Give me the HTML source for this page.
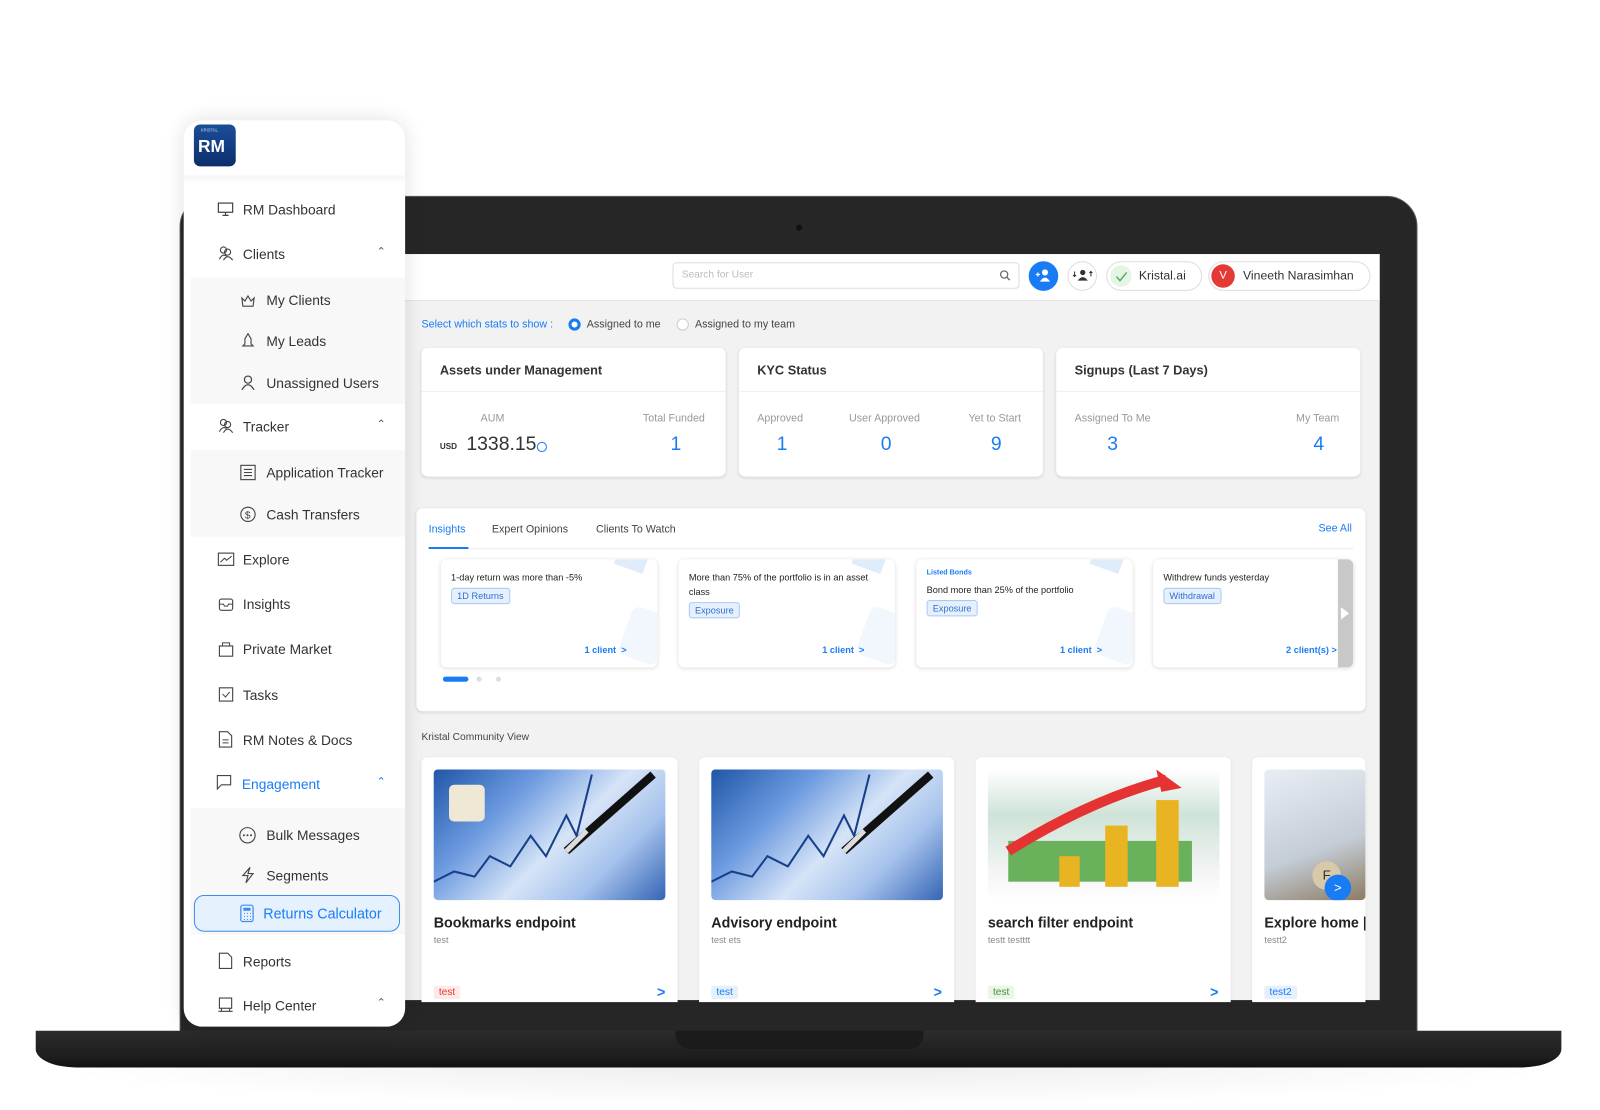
<!DOCTYPE html>
<html><head><meta charset="utf-8">
<style>
*{box-sizing:border-box;margin:0;padding:0}
html,body{width:1600px;height:1110px;overflow:hidden;background:#fff;font-family:"Liberation Sans",sans-serif}
#w{position:absolute;left:0;top:0;width:1560px;height:1082px;transform:scale(1.0205);transform-origin:0 0}
.a{position:absolute}
.t{position:absolute;white-space:nowrap}
.card{position:absolute;background:#fff;border-radius:6px;box-shadow:0 1px 3px rgba(0,0,0,.12)}
.lbl{position:absolute;font-size:10.5px;color:#999}
.num{position:absolute;font-size:19px;color:#1a7cf5}
.ins{position:absolute;top:548px;height:106px;background:#fff;border-radius:6px;box-shadow:0 1px 4px rgba(0,0,0,.14);overflow:hidden}
.ins .tx{position:absolute;left:10px;top:11px;font-size:9px;color:#222;line-height:14px;width:180px}
.tag{position:absolute;font-size:9px;color:#2f6fd1;background:#e6f0fd;border:1px solid #a9c9f3;border-radius:3px;padding:2px 5px}
.cl{position:absolute;right:30px;top:84px;font-size:9px;font-weight:bold;color:#1a7cf5}
.cc{position:absolute;top:742px;height:240px;background:#fff;border-radius:6px 6px 0 0;overflow:hidden;box-shadow:0 1px 3px rgba(0,0,0,.08)}
.cc .img{position:absolute;left:12px;top:12px;height:128px;border-radius:4px;overflow:hidden}
.cc h3{position:absolute;left:12px;top:154px;font-size:14px;font-weight:bold;color:#222;white-space:nowrap}
.cc .s{position:absolute;left:12px;top:174px;font-size:9px;color:#888}
.cc .tg{position:absolute;left:12px;top:224px;font-size:10px;padding:1px 5px;border-radius:2px}
.cc .ar{position:absolute;right:12px;top:222px;color:#1a7cf5;font-size:14px;font-weight:bold}
</style></head><body><div id="w">
<div class="a" style="left:20px;top:1040px;width:1530px;height:45px;background:radial-gradient(ellipse at 50% 0%,rgba(0,0,0,.08),rgba(0,0,0,0) 70%)"></div>
<div class="a" style="left:176px;top:192px;width:1213px;height:830px;background:#262626;border-radius:30px 30px 0 0;border:1px solid #555"></div>
<div class="a" style="left:780px;top:220px;width:6px;height:6px;border-radius:3px;background:#111"></div>
<div class="a" style="left:215px;top:249px;width:1137px;height:731px;background:#f2f2f2;overflow:hidden">
  <div class="a" style="left:0;top:0;width:1137px;height:46px;background:#fff;border-bottom:1px solid #e5e5e5"></div>
</div>
<div class="a" style="left:659px;top:257px;width:340px;height:26px;border:1px solid #ddd;border-radius:4px;background:#fff"></div>
<div class="t" style="left:668px;top:264px;font-size:10px;color:#bbb">Search for User</div>
<svg class="a" style="left:979px;top:264px" width="12" height="12"><circle cx="5" cy="5" r="3.5" fill="none" stroke="#666" stroke-width="1.2"/><path d="M7.5 7.5 L10.5 10.5" stroke="#666" stroke-width="1.3"/></svg>
<div class="a" style="left:1008px;top:256px;width:29px;height:29px;border-radius:50%;background:#1a7cf5"></div>
<svg class="a" style="left:1013px;top:262px" width="20" height="16"><circle cx="11" cy="5" r="3" fill="#fff"/><path d="M6 14 q5-8 10 0z" fill="#fff"/><path d="M2 7h4M4 5v4" stroke="#fff" stroke-width="1.3"/></svg>
<div class="a" style="left:1046px;top:256px;width:29px;height:29px;border-radius:50%;background:#fff;border:1px solid #ddd"></div>
<svg class="a" style="left:1050px;top:262px" width="22" height="16"><circle cx="11" cy="5" r="2.6" fill="#333"/><path d="M6 13 q5-7 10 0z" fill="#333"/><path d="M3 4v5M1.5 7.5 3 9 4.5 7.5M19 4v5M17.5 5.5 19 4 20.5 5.5" stroke="#333" stroke-width="1" fill="none"/></svg>
<div class="a" style="left:1084px;top:256px;width:94px;height:29px;border-radius:15px;background:#fff;border:1px solid #ddd"></div>
<div class="a" style="left:1088px;top:260px;width:21px;height:21px;border-radius:50%;background:#e4f5e6"></div>
<svg class="a" style="left:1092px;top:264px" width="14" height="14"><path d="M2 7 L5.5 11 L12 3" stroke="#4caf50" stroke-width="1.4" fill="none"/></svg>
<div class="t" style="left:1116px;top:263px;font-size:12px;color:#333">Kristal.ai</div>
<div class="a" style="left:1184px;top:256px;width:159px;height:29px;border-radius:15px;background:#fff;border:1px solid #ddd"></div>
<div class="a" style="left:1187px;top:259px;width:23px;height:23px;border-radius:50%;background:#e53935;color:#fff;font-size:11px;text-align:center;line-height:23px">V</div>
<div class="t" style="left:1218px;top:263px;font-size:12px;color:#333">Vineeth Narasimhan</div>
<div class="t" style="left:413px;top:312px;font-size:10.5px;color:#1a7cf5">Select which stats to show :</div>
<div class="a" style="left:557px;top:312px;width:12px;height:12px;border-radius:50%;border:3px solid #1a7cf5;background:#fff"></div>
<div class="t" style="left:575px;top:312px;font-size:10.5px;color:#444">Assigned to me</div>
<div class="a" style="left:663px;top:312px;width:12px;height:12px;border-radius:50%;border:1px solid #ccc;background:#fff"></div>
<div class="t" style="left:681px;top:312px;font-size:10.5px;color:#444">Assigned to my team</div>
<div class="card" style="left:413px;top:341px;width:298px;height:126px">
 <div class="t" style="left:18px;top:15px;font-size:12.5px;font-weight:bold;color:#333">Assets under Management</div>
 <div class="a" style="left:0;top:42px;width:298px;height:1px;background:#eee"></div>
 <div class="lbl" style="left:58px;top:63px">AUM</div><div class="lbl" style="left:217px;top:63px">Total Funded</div>
 <div class="t" style="left:18px;top:92px;font-size:8px;font-weight:bold;color:#333">USD</div>
 <div class="t" style="left:44px;top:84px;font-size:19px;color:#333">1338.15</div>
 <div class="a" style="left:113px;top:92px;width:10px;height:10px;border-radius:50%;border:1px solid #1a7cf5"></div>
 <div class="num" style="left:244px;top:84px">1</div>
</div>
<div class="card" style="left:724px;top:341px;width:298px;height:126px">
 <div class="t" style="left:18px;top:15px;font-size:12.5px;font-weight:bold;color:#333">KYC Status</div>
 <div class="a" style="left:0;top:42px;width:298px;height:1px;background:#eee"></div>
 <div class="lbl" style="left:18px;top:63px">Approved</div><div class="lbl" style="left:108px;top:63px">User Approved</div><div class="lbl" style="left:225px;top:63px">Yet to Start</div>
 <div class="num" style="left:37px;top:84px">1</div><div class="num" style="left:139px;top:84px">0</div><div class="num" style="left:247px;top:84px">9</div>
</div>
<div class="card" style="left:1035px;top:341px;width:298px;height:126px">
 <div class="t" style="left:18px;top:15px;font-size:12.5px;font-weight:bold;color:#333">Signups (Last 7 Days)</div>
 <div class="a" style="left:0;top:42px;width:298px;height:1px;background:#eee"></div>
 <div class="lbl" style="left:18px;top:63px">Assigned To Me</div><div class="lbl" style="left:235px;top:63px">My Team</div>
 <div class="num" style="left:50px;top:84px">3</div><div class="num" style="left:252px;top:84px">4</div>
</div>
<div class="card" style="left:408px;top:498px;width:930px;height:199px"></div>
<div class="t" style="left:420px;top:513px;font-size:10.5px;color:#1a7cf5">Insights</div>
<div class="t" style="left:482px;top:513px;font-size:10.5px;color:#444">Expert Opinions</div>
<div class="t" style="left:584px;top:513px;font-size:10.5px;color:#444">Clients To Watch</div>
<div class="t" style="left:1292px;top:512px;font-size:10.5px;color:#1a7cf5">See All</div>
<div class="a" style="left:420px;top:537px;width:906px;height:1px;background:#eee"></div>
<div class="a" style="left:420px;top:536px;width:39px;height:2px;background:#1a7cf5"></div>
<div class="ins" style="left:432px;width:212px"><div class="a" style="left:172px;top:-10px;width:30px;height:20px;background:#e1ecfb;transform:rotate(20deg)"></div><div class="a" style="left:180px;top:50px;width:40px;height:50px;background:#f2f6fd;border-radius:8px;transform:rotate(20deg)"></div><div class="tx">1-day return was more than -5%</div><div class="tag" style="left:10px;top:28px">1D Returns</div><div class="cl">1 client &nbsp;&gt;</div></div>
<div class="ins" style="left:665px;width:212px"><div class="a" style="left:172px;top:-10px;width:30px;height:20px;background:#e1ecfb;transform:rotate(20deg)"></div><div class="a" style="left:180px;top:50px;width:40px;height:50px;background:#f2f6fd;border-radius:8px;transform:rotate(20deg)"></div><div class="tx">More than 75% of the portfolio is in an asset class</div><div class="tag" style="left:10px;top:42px">Exposure</div><div class="cl">1 client &nbsp;&gt;</div></div>
<div class="ins" style="left:898px;width:212px"><div class="a" style="left:172px;top:-10px;width:30px;height:20px;background:#e1ecfb;transform:rotate(20deg)"></div><div class="a" style="left:180px;top:50px;width:40px;height:50px;background:#f2f6fd;border-radius:8px;transform:rotate(20deg)"></div><div class="t" style="left:10px;top:10px;font-size:7px;font-weight:bold;color:#1a7cf5">Listed Bonds</div><div class="tx" style="top:23px">Bond more than 25% of the portfolio</div><div class="tag" style="left:10px;top:40px">Exposure</div><div class="cl">1 client &nbsp;&gt;</div></div>
<div class="ins" style="left:1130px;width:196px"><div class="tx">Withdrew funds yesterday</div><div class="tag" style="left:10px;top:28px">Withdrawal</div><div class="cl" style="right:16px">2 client(s) &gt;</div><div class="a" style="left:181px;top:0;width:15px;height:106px;background:#c8c8c8"></div><div class="a" style="left:184px;top:47px;border-left:8px solid #fff;border-top:6px solid transparent;border-bottom:6px solid transparent"></div></div>
<div class="a" style="left:434px;top:663px;width:25px;height:5px;border-radius:3px;background:#1a7cf5"></div>
<div class="a" style="left:467px;top:663px;width:5px;height:5px;border-radius:3px;background:#ddd"></div>
<div class="a" style="left:486px;top:663px;width:5px;height:5px;border-radius:3px;background:#ddd"></div>
<div class="t" style="left:413px;top:717px;font-size:10px;color:#444">Kristal Community View</div>
<div class="cc" style="left:413px;width:251px"><div class="img" style="width:227px;background:linear-gradient(135deg,#1f56a8 0%,#6d9be0 30%,#d6e4f7 55%,#a5c2ec 75%,#3465b5 100%)"><svg width="227" height="128"><path d="M0 110 l20-10 20 5 15-20 20 10 20-30 15 20 20-40 10 20 15-60" stroke="#173f8a" stroke-width="2" fill="none"/><path d="M130 80 L215 5" stroke="#111" stroke-width="8"/><path d="M130 80 L150 60" stroke="#ddd" stroke-width="5"/><rect x="15" y="15" width="35" height="36" rx="5" fill="#efe8d4"/></svg></div><h3>Bookmarks endpoint</h3><div class="s">test</div><div class="tg" style="background:#fdeaea;color:#e53935">test</div><div class="ar">&gt;</div></div>
<div class="cc" style="left:685px;width:250px"><div class="img" style="width:227px;background:linear-gradient(135deg,#1f56a8 0%,#6d9be0 30%,#d6e4f7 55%,#a5c2ec 75%,#3465b5 100%)"><svg width="227" height="128"><path d="M0 110 l20-10 20 5 15-20 20 10 20-30 15 20 20-40 10 20 15-60" stroke="#173f8a" stroke-width="2" fill="none"/><path d="M130 80 L215 5" stroke="#111" stroke-width="8"/><path d="M130 80 L150 60" stroke="#ddd" stroke-width="5"/></svg></div><h3>Advisory endpoint</h3><div class="s">test ets</div><div class="tg" style="background:#e6f0fd;color:#1a7cf5">test</div><div class="ar">&gt;</div></div>
<div class="cc" style="left:956px;width:250px"><div class="img" style="width:227px;background:linear-gradient(180deg,#fff 0%,#cfe3d8 35%,#f5f5f5 80%,#fff 100%)"><svg width="227" height="128"><rect x="20" y="70" width="180" height="40" fill="#69b15a"/><rect x="70" y="85" width="20" height="30" fill="#e9b422"/><rect x="115" y="55" width="22" height="60" fill="#e9b422"/><rect x="165" y="30" width="22" height="85" fill="#e9b422"/><path d="M20 80 Q100 30 175 10" stroke="#e53232" stroke-width="10" fill="none"/><path d="M165 0 L190 18 L170 22z" fill="#e53232"/></svg></div><h3>search filter endpoint</h3><div class="s">testt testttt</div><div class="tg" style="background:#eaf6e6;color:#4a8f3a">test</div><div class="ar">&gt;</div></div>
<div class="cc" style="left:1227px;width:111px"><div class="img" style="width:99px;background:linear-gradient(160deg,#e9eef5,#c4ccd6 60%,#8c7c62)"><div class="a" style="left:47px;top:90px;width:28px;height:28px;border-radius:50%;background:#d8c9a8;font-size:13px;text-align:center;line-height:28px;color:#333">F</div><div class="a" style="left:59px;top:103px;width:26px;height:26px;border-radius:50%;background:#1a7cf5;color:#fff;text-align:center;line-height:26px;font-size:13px">&gt;</div></div><h3>Explore home |</h3><div class="s">testt2</div><div class="tg" style="background:#e6f0fd;color:#1a7cf5">test2</div></div>
<div class="a" style="left:35px;top:1010px;width:1495px;height:36px;background:linear-gradient(#2c2c2c,#1e1e1e 70%,#111);border-radius:0 0 40px 40px / 0 0 18px 18px"></div>
<div class="a" style="left:662px;top:1010px;width:243px;height:18px;background:#1b1b1b;border-radius:0 0 14px 14px"></div>
<div class="a" style="left:180px;top:118px;width:217px;height:888px;background:#fff;border-radius:18px;box-shadow:0 0 20px rgba(0,0,0,.12);overflow:hidden">
 <div class="a" style="left:10px;top:4px;width:41px;height:41px;border-radius:6px;background:linear-gradient(#1b4e9a,#0c2f6b)"></div>
 <div class="t" style="left:17px;top:7px;font-size:4px;color:#cfdcf0">KRISTAL</div>
 <div class="t" style="left:14px;top:16px;font-size:17px;font-weight:bold;color:#fff">RM</div>
 <div class="a" style="left:0;top:54px;width:217px;height:8px;background:linear-gradient(rgba(0,0,0,.04),rgba(0,0,0,0))"></div>
 <div class="a" style="left:7px;top:154px;width:210px;height:124px;background:#f8f8f8"></div>
 <div class="a" style="left:7px;top:323px;width:210px;height:85px;background:#f8f8f8"></div>
 <div class="a" style="left:7px;top:674px;width:210px;height:124px;background:#f8f8f8"></div>
</div>
<div class="a" style="left:180px;top:118px;width:217px;height:888px;font-size:13.5px;color:#333">
 <svg class="a" style="left:33px;top:80px" width="16" height="14"><rect x="1" y="1" width="14" height="9" fill="none" stroke="#444" stroke-width="1.2"/><path d="M8 10v3M5 13h6" stroke="#444" stroke-width="1.2"/></svg>
 <div class="t" style="left:58px;top:80px">RM Dashboard</div>
 <svg class="a" style="left:33px;top:122px" width="17" height="16"><circle cx="6" cy="5" r="3" fill="none" stroke="#444" stroke-width="1.1"/><circle cx="10" cy="7" r="3" fill="none" stroke="#444" stroke-width="1.1"/><path d="M2 14q3-6 7-3M6 15q4-7 9 0" fill="none" stroke="#444" stroke-width="1.1"/></svg>
 <div class="t" style="left:58px;top:124px">Clients</div><div class="t" style="left:189px;top:122px;font-size:11px;color:#555">&#8963;</div>
 <svg class="a" style="left:55px;top:169px" width="16" height="15"><path d="M2 5 L5 8 L8 3 L11 8 L14 5 L13 13 H3z" fill="none" stroke="#444" stroke-width="1.1"/></svg>
 <div class="t" style="left:81px;top:169px">My Clients</div>
 <svg class="a" style="left:55px;top:208px" width="16" height="16"><path d="M8 1 L11 6 V11 L13 13 H3 L5 11 V6z" fill="none" stroke="#444" stroke-width="1.1"/></svg>
 <div class="t" style="left:81px;top:209px">My Leads</div>
 <svg class="a" style="left:55px;top:249px" width="16" height="16"><circle cx="8" cy="5" r="3.5" fill="none" stroke="#444" stroke-width="1.2"/><path d="M2 15q6-10 12 0" fill="none" stroke="#444" stroke-width="1.2"/></svg>
 <div class="t" style="left:81px;top:250px">Unassigned Users</div>
 <svg class="a" style="left:33px;top:291px" width="17" height="16"><circle cx="6" cy="5" r="3" fill="none" stroke="#444" stroke-width="1.1"/><circle cx="10" cy="7" r="3" fill="none" stroke="#444" stroke-width="1.1"/><path d="M2 14q3-6 7-3M6 15q4-7 9 0" fill="none" stroke="#444" stroke-width="1.1"/></svg>
 <div class="t" style="left:58px;top:293px">Tracker</div><div class="t" style="left:189px;top:291px;font-size:11px;color:#555">&#8963;</div>
 <svg class="a" style="left:55px;top:337px" width="16" height="16"><rect x="1" y="1" width="14" height="14" fill="none" stroke="#444" stroke-width="1.1"/><path d="M4 5h8M4 8h8M4 11h8" stroke="#444"/></svg>
 <div class="t" style="left:81px;top:338px">Application Tracker</div>
 <svg class="a" style="left:55px;top:378px" width="16" height="16"><circle cx="8" cy="8" r="7" fill="none" stroke="#444" stroke-width="1.1"/><text x="5" y="12" font-size="10" fill="#444" font-family="Liberation Sans">$</text></svg>
 <div class="t" style="left:81px;top:379px">Cash Transfers</div>
 <svg class="a" style="left:33px;top:423px" width="17" height="14"><rect x="1" y="1" width="15" height="12" fill="none" stroke="#444" stroke-width="1.1"/><path d="M3 10 L7 6 L9 8 L14 4" fill="none" stroke="#444"/></svg>
 <div class="t" style="left:58px;top:423px">Explore</div>
 <svg class="a" style="left:34px;top:467px" width="15" height="14"><rect x="1" y="2" width="13" height="11" rx="2" fill="none" stroke="#444" stroke-width="1.1"/><path d="M1 7h4l1 2h3l1-2h4" fill="none" stroke="#444"/></svg>
 <div class="t" style="left:58px;top:467px">Insights</div>
 <svg class="a" style="left:34px;top:510px" width="15" height="16"><rect x="1" y="5" width="13" height="10" fill="none" stroke="#444" stroke-width="1.1"/><path d="M4 5V2h7v3" fill="none" stroke="#444"/></svg>
 <div class="t" style="left:58px;top:511px">Private Market</div>
 <svg class="a" style="left:34px;top:555px" width="15" height="15"><rect x="1" y="1" width="13" height="13" fill="none" stroke="#444" stroke-width="1.1"/><path d="M4 7l3 3 4-5" fill="none" stroke="#444"/></svg>
 <div class="t" style="left:58px;top:556px">Tasks</div>
 <svg class="a" style="left:34px;top:598px" width="14" height="17"><path d="M1 1h8l4 4v11H1z" fill="none" stroke="#444" stroke-width="1.1"/><path d="M4 9h6M4 12h6" stroke="#444"/></svg>
 <div class="t" style="left:58px;top:600px">RM Notes &amp; Docs</div>
 <svg class="a" style="left:32px;top:641px" width="15" height="16"><path d="M1 1h13v9H5l-4 4z" fill="none" stroke="#444" stroke-width="1.1"/></svg>
 <div class="t" style="left:57px;top:643px;color:#1a7cf5">Engagement</div><div class="t" style="left:189px;top:641px;font-size:11px;color:#1a7cf5">&#8963;</div>
 <svg class="a" style="left:54px;top:692px" width="17" height="17"><circle cx="8.5" cy="8.5" r="7.5" fill="none" stroke="#444" stroke-width="1.1"/><circle cx="5" cy="8.5" r="1" fill="#444"/><circle cx="8.5" cy="8.5" r="1" fill="#444"/><circle cx="12" cy="8.5" r="1" fill="#444"/></svg>
 <div class="t" style="left:81px;top:693px">Bulk Messages</div>
 <svg class="a" style="left:55px;top:731px" width="16" height="17"><path d="M10 1 L3 9 H8 L6 16 L13 7 H8z" fill="none" stroke="#444" stroke-width="1.1"/></svg>
 <div class="t" style="left:81px;top:733px">Segments</div>
 <div class="a" style="left:10px;top:759px;width:202px;height:36px;border:1.5px solid #3b8cf0;border-radius:10px;background:#e6f1fe"></div>
 <svg class="a" style="left:55px;top:768px" width="14" height="18"><rect x="1" y="1" width="12" height="16" rx="2" fill="none" stroke="#3b8cf0" stroke-width="1.2"/><rect x="3.5" y="3.5" width="7" height="3" fill="#3b8cf0"/><path d="M4 9h1M7 9h1M10 9h1M4 12h1M7 12h1M10 12h1M4 15h1M7 15h1M10 15h1" stroke="#3b8cf0"/></svg>
 <div class="t" style="left:78px;top:769px;color:#1a7cf5;font-size:14px">Returns Calculator</div>
 <svg class="a" style="left:34px;top:815px" width="14" height="17"><path d="M1 1h8l4 4v11H1z" fill="none" stroke="#444" stroke-width="1.1"/></svg>
 <div class="t" style="left:58px;top:817px">Reports</div>
 <svg class="a" style="left:33px;top:859px" width="16" height="16"><rect x="2" y="1" width="12" height="10" fill="none" stroke="#444" stroke-width="1.1"/><path d="M1 14h14M4 11v3M12 11v3" stroke="#444" stroke-width="1.1"/></svg>
 <div class="t" style="left:58px;top:860px">Help Center</div><div class="t" style="left:189px;top:858px;font-size:11px;color:#555">&#8963;</div>
</div>
</div></body></html>
